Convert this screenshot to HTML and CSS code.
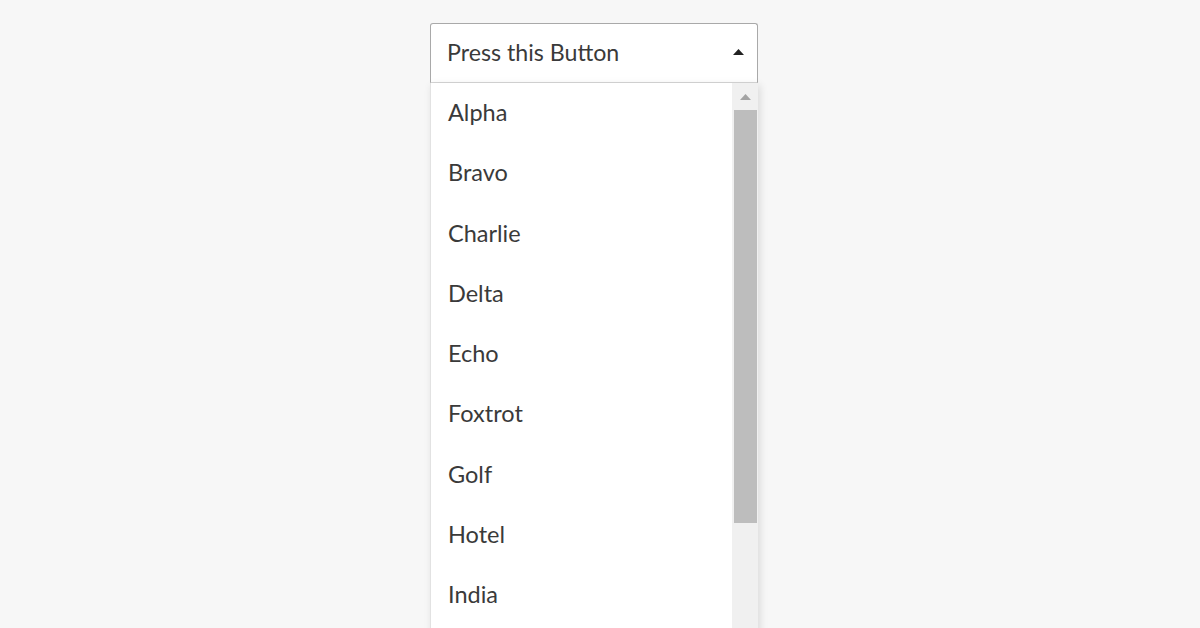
FILE: index.html
```html
<!DOCTYPE html>
<html>
<head>
<meta charset="utf-8">
<link rel="stylesheet" href="styles.css">
</head>
<body>
<div class="page">
  <div class="select">
    <button class="select-btn">
      <span>Press this Button</span>
      <svg class="caret" width="11" height="6" viewBox="0 0 11 6"><path d="M0 6 L5.5 0 L11 6 Z" fill="#222"/></svg>
    </button>
    <div class="menu">
      <ul class="list">
        <li>Alpha</li>
        <li>Bravo</li>
        <li>Charlie</li>
        <li>Delta</li>
        <li>Echo</li>
        <li>Foxtrot</li>
        <li>Golf</li>
        <li>Hotel</li>
        <li>India</li>
      </ul>
      <div class="scrollbar">
        <div class="arrow-up"><svg width="11" height="6" viewBox="0 0 11 6"><path d="M0 6 L5.5 0 L11 6 Z" fill="#a3a3a3"/></svg></div>
        <div class="thumb"></div>
      </div>
    </div>
  </div>
</div>
</body>
</html>
```
FILE: styles.css
```css
html, body {
  margin: 0;
  padding: 0;
  background: #f7f7f7;
  height: 100%;
  overflow: hidden;
}
.page {
  display: flex;
  justify-content: center;
  padding-top: 23px;
  font-family: Lato, "Open Sans", sans-serif;
  color: #3a3a3a;
}
.select {
  width: 328px;
  margin-right: 12px;
}
.select-btn {
  box-sizing: border-box;
  width: 328px;
  height: 60px;
  display: flex;
  align-items: center;
  justify-content: space-between;
  padding: 0 13px 2px 16px;
  background: #fff;
  border: 1px solid #a9a9a9;
  border-radius: 3px 3px 0 0;
  border-bottom-color: #d6d6d6;
  font-family: inherit;
  font-size: 23.2px;
  color: #3a3a3a;
  cursor: pointer;
}
.caret {
  margin-bottom: 1px;
}
.menu {
  display: flex;
  width: 328px;
  height: 600px;
  background: #fff;
  border-left: 1px solid #e2e2e2;
  box-sizing: border-box;
  box-shadow: 2px 2px 8px rgba(0,0,0,0.12);
}
.list {
  flex: 1;
  list-style: none;
  margin: 0;
  padding: 0;
}
.list li {
  box-sizing: border-box;
  height: 60.25px;
  display: flex;
  align-items: center;
  padding-left: 17px;
  padding-bottom: 2px;
  font-size: 23.5px;
}
.scrollbar {
  width: 26px;
  background: #f0f0f0;
  display: flex;
  flex-direction: column;
  align-items: center;
}
.arrow-up {
  height: 27px;
  display: flex;
  align-items: center;
  justify-content: center;
}
.thumb {
  width: 23px;
  height: 413px;
  background: #bdbdbd;
}
```
